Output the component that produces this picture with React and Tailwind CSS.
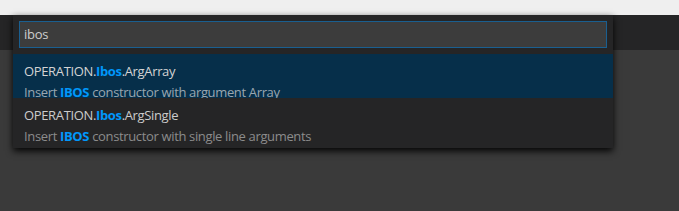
export default function App() {
  const rows = [
    { name: 'ArgArray', desc: 'constructor with argument Array', selected: true },
    { name: 'ArgSingle', desc: 'constructor with single line arguments', selected: false },
  ]

  return (
    <div
      className="w-[679px] h-[211px] flex flex-col bg-[#3a3a3a] overflow-hidden"
      style={{ fontFamily: '"Open Sans", "Noto Sans", sans-serif' }}
    >
      <div className="h-[15px] bg-[#efefef] shrink-0" />
      <div className="relative flex-1">
        <div className="h-[35px] bg-[#252526]" />

        <div className="absolute left-[13px] top-0 w-[600px] bg-[#252526] shadow-[0_3px_7px_rgba(0,0,0,0.95)] pt-[6px] pb-[6px]">
          <div className="mx-[6px] h-[27px] border border-[#1a5f90] bg-[#3c3c3c] flex items-center pl-[4px] text-[13px] tracking-[-0.3px] text-[#cccccc]">
            ibos
          </div>
          <div className="mt-[6px] flex flex-col">
            {rows.map((r) => (
              <div
                key={r.name}
                className={
                  'h-[44px] pl-[11px] text-[13px] tracking-[-0.35px] leading-[21px] pt-[6.5px] ' +
                  (r.selected ? 'bg-[#062f4a] overflow-hidden' : '')
                }
              >
                <div className={'whitespace-nowrap ' + (r.selected ? 'text-[#d4d4d4]' : 'text-[#cccccc]')}>
                  OPERATION.<span className="text-[#0097fb] font-bold">Ibos</span>.{r.name}
                </div>
                <div className={'whitespace-nowrap ' + (r.selected ? 'text-[#9aa6b0]' : 'text-[#8c8c8c]')}>
                  Insert <span className="text-[#0097fb] font-bold">IBOS</span> {r.desc}
                </div>
              </div>
            ))}
          </div>
        </div>
      </div>
    </div>
  )
}
